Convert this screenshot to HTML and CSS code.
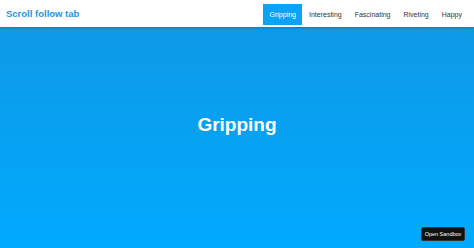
FILE: index.html
```html
<!DOCTYPE html>
<html>
<head>
<meta charset="utf-8">
<link rel="stylesheet" href="styles.css">
</head>
<body>
<header class="header">
  <div class="brand">Scroll follow tab</div>
  <nav class="nav">
    <a class="tab active">Gripping</a>
    <a class="tab">Interesting</a>
    <a class="tab">Fascinating</a>
    <a class="tab">Riveting</a>
    <a class="tab">Happy</a>
  </nav>
</header>
<main class="hero">
  <h1 class="title">Gripping</h1>
</main>
<button class="sandbox">Open Sandbox</button>
</body>
</html>
```
FILE: styles.css
```css
html, body {
  margin: 0;
  padding: 0;
  height: 100%;
  overflow: hidden;
  font-family: "Liberation Sans", Arial, sans-serif;
}
body {
  display: flex;
  flex-direction: column;
}
.header {
  height: 27px;
  flex: none;
  display: flex;
  align-items: center;
  justify-content: space-between;
  background: #fff;
  box-shadow: 0 1px 2px rgba(0, 60, 120, 0.35);
  position: relative;
  z-index: 1;
}
.brand {
  padding-left: 6px;
  font-weight: bold;
  font-size: 9.5px;
  color: #1d97dc;
}
.nav {
  display: flex;
  align-self: stretch;
  align-items: center;
  padding-right: 5.5px;
}
.tab {
  font-size: 7px;
  color: #333;
  padding: 0 6.5px;
  height: 21px;
  line-height: 21px;
  margin-top: 1px;
}
.tab.active {
  background: #0aa3f5;
  color: #fff;
}
.hero {
  flex: 1;
  display: flex;
  align-items: center;
  justify-content: center;
  background: linear-gradient(#0e99e6, #00aaff);
}
.title {
  margin: 0;
  margin-top: -26px;
  color: #fff;
  font-size: 19px;
  font-weight: bold;
}
.sandbox {
  position: absolute;
  right: 9px;
  bottom: 7px;
  width: 44px;
  height: 14px;
  padding: 0;
  border: 1px solid #333;
  border-radius: 2px;
  background: #111;
  color: #fff;
  font-family: "Liberation Sans", Arial, sans-serif;
  font-size: 5.5px;
}
```
